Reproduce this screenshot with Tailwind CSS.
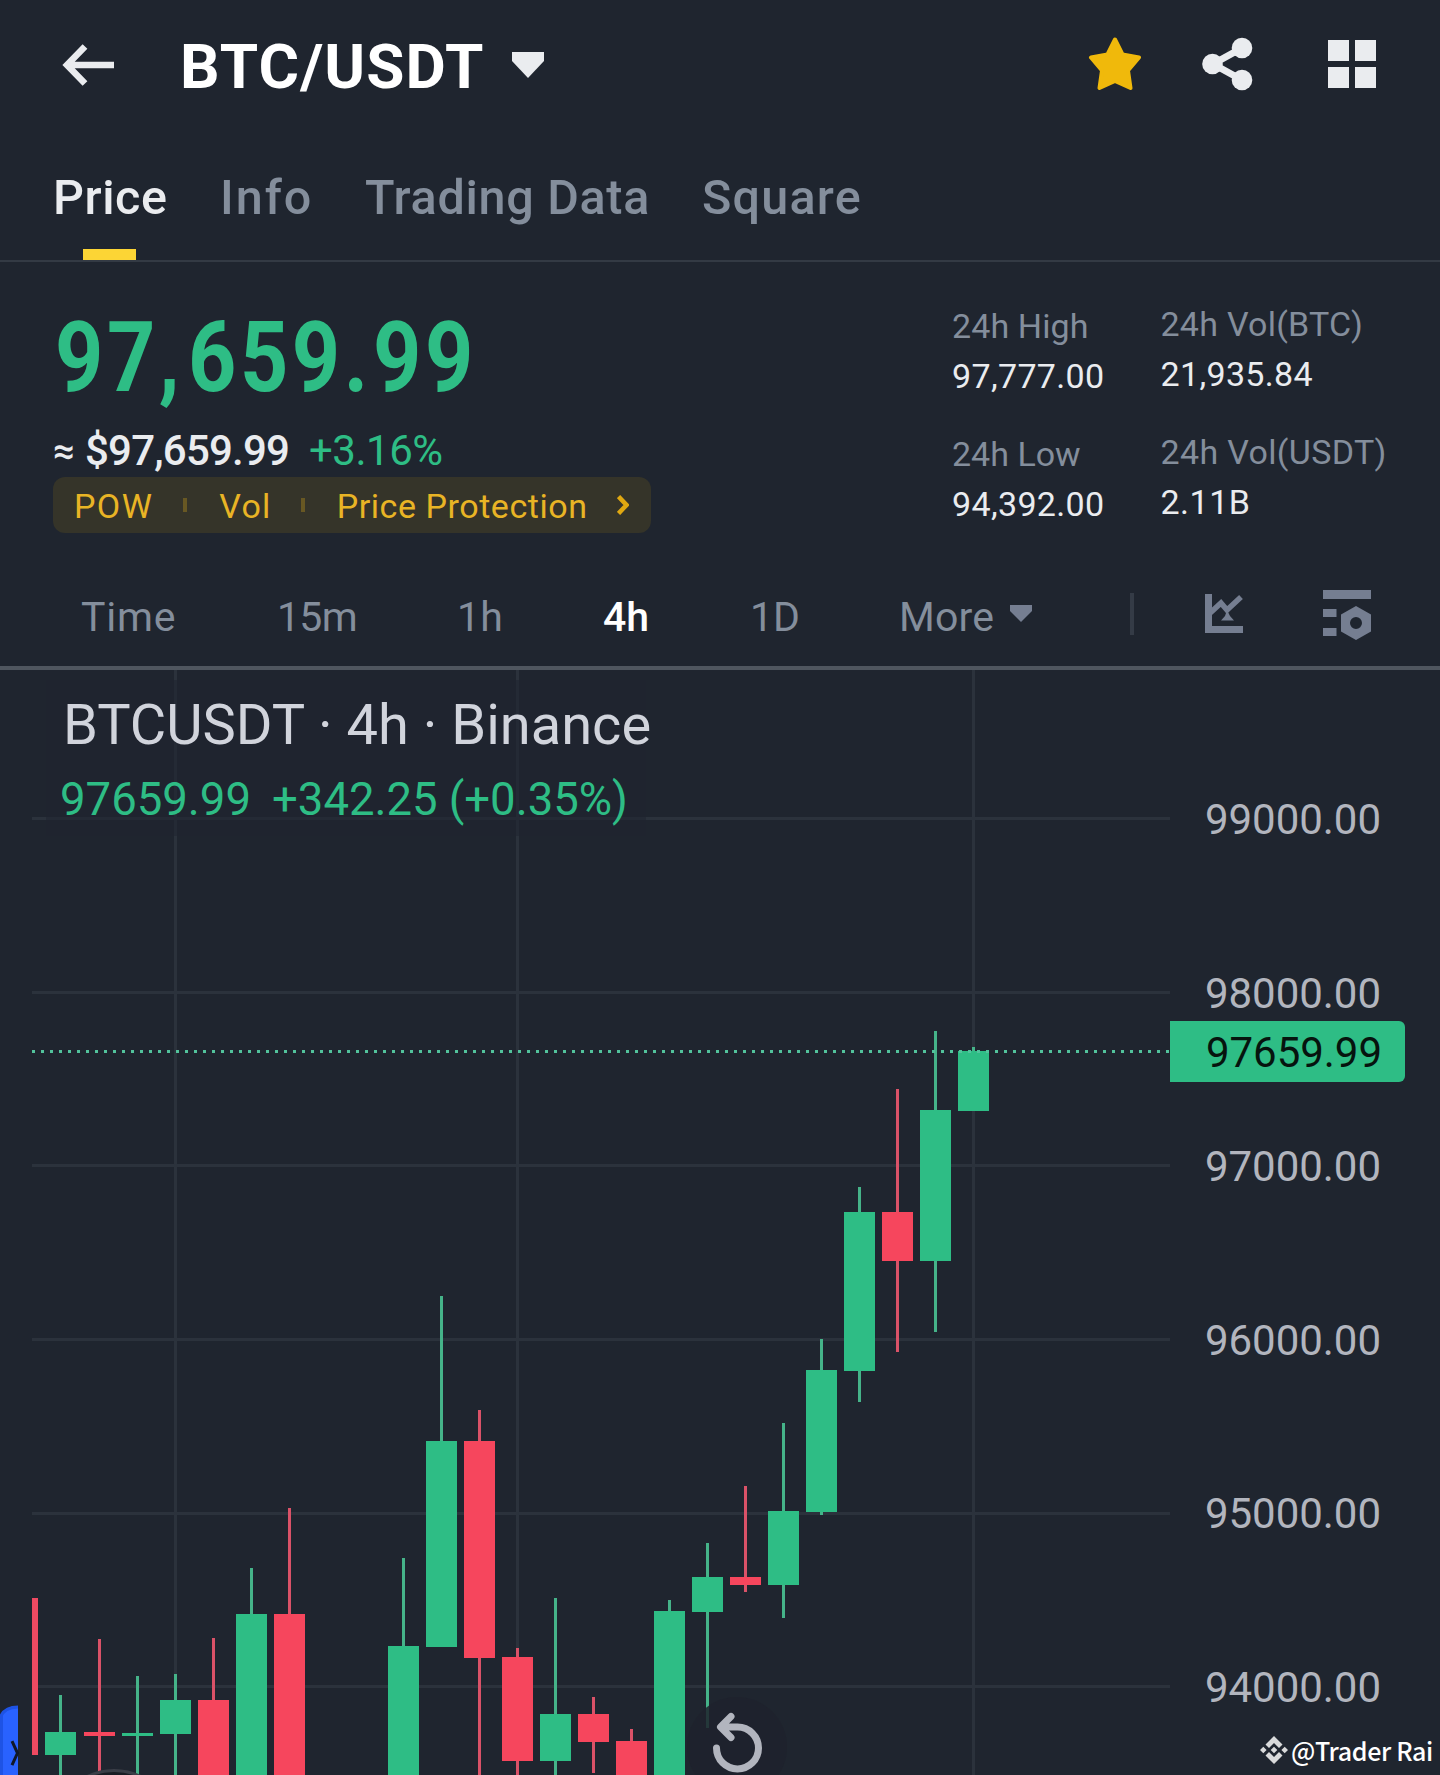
<!DOCTYPE html>
<html lang="en">
<head>
<meta charset="utf-8">
<meta name="viewport" content="width=device-width, initial-scale=1">
<title>BTC/USDT</title>
<script src="https://cdn.jsdelivr.net/npm/@tailwindcss/browser@4"></script>
</head>
<body class="bg-[#1f252f] font-[Roboto,sans-serif] text-[#eaecef]">
<main class="flex h-[1775px] w-[1440px] flex-col overflow-hidden bg-[#1f252f]">

  <header class="flex h-32 items-center pl-[62px] pr-16">
    <svg class="mt-px h-[42px] w-[52px] shrink-0" viewBox="0 0 52 42" fill="none" stroke="#eaecef" stroke-width="6.6"><path d="M52 21H6M23 2.5L5 21L23 39.5"/></svg>
    <h1 class="ml-[66px] pt-1.5 text-[62px] font-bold leading-none tracking-[1.1px] whitespace-nowrap text-white">BTC/USDT</h1>
    <svg class="ml-[28px] mt-0.5 h-[26px] w-8" viewBox="0 0 32 26" fill="#eaecef"><path d="M0 0H32V9L16 26L0 9Z"/></svg>
    <div class="ml-auto flex items-center">
      <svg class="h-[54px] w-[54px]" viewBox="0 0 54 54" fill="#f0b90b" stroke="#f0b90b" stroke-width="4" stroke-linejoin="round"><path d="M27 2.5L34.5 17.5L51 20.5L40 33.5L42.5 51L27 44L11.5 51L14 33.5L3 20.5L19.5 17.5Z"/></svg>
      <svg class="ml-[60px] h-[54px] w-[51px]" viewBox="0 0 51 54" fill="#eaecef"><path d="M11 27L40 11M11 27L40 43" stroke="#eaecef" stroke-width="7"/><circle cx="10.5" cy="27" r="10.3"/><circle cx="40" cy="11" r="10.3"/><circle cx="40" cy="43" r="10.3"/></svg>
      <svg class="ml-[75px] h-12 w-12" viewBox="0 0 48 48" fill="#eaecef"><path d="M0 0H21V21H0ZM27 0H48V21H27ZM0 27H21V48H0ZM27 27H48V48H27Z"/></svg>
    </div>
  </header>

  <nav class="grid h-[134px] shrink-0 grid-cols-[167px_145px_337px_1fr] border-b-2 border-[#333a44] pl-[53px] pt-10 text-[48.5px] font-medium leading-[60px] whitespace-nowrap text-[#848e9c]">
    <div class="relative tracking-[0.55px] text-[#eaecef]">Price<span class="absolute bottom-0 left-[30px] h-[11px] w-[53px] bg-[#fcd535]"></span></div>
    <span class="tracking-[2px]">Info</span>
    <span class="tracking-[0.7px]">Trading Data</span>
    <span class="tracking-[1.2px]">Square</span>
  </nav>

  <section class="flex h-[306px] shrink-0 justify-between pl-[53px]">
    <div class="flex flex-col items-start pt-[46px]">
      <div class="ml-0.5 origin-left scale-x-86 text-[98px] font-bold leading-[100px] tracking-[4.1px] whitespace-nowrap text-[#2ebd85]">97<span class="tracking-[10px]">,</span>659<span class="tracking-[5.7px]">.</span>99</div>
      <div class="mt-[18px] flex h-[50px] items-center text-[42px] leading-[50px] whitespace-nowrap">
        <span class="w-8 text-[38px] font-medium">≈</span>
        <span class="font-medium tracking-[-0.8px]">$97,659.99</span>
        <span class="ml-5 tracking-[-0.5px] text-[#2ebd85]">+3.16%</span>
      </div>
      <div class="mt-px flex h-14 w-[598px] items-center rounded-xl bg-[#353429] pl-[21px] text-[34px] whitespace-nowrap text-[#e9b425]">
        <span class="pt-0.5 tracking-[1.4px]">POW</span><span class="ml-[30px] h-[14px] w-1 bg-[#685823]"></span>
        <span class="ml-8 pt-0.5 tracking-[1.3px]">Vol</span><span class="ml-[29px] h-[14px] w-1 bg-[#685823]"></span>
        <span class="ml-8 pt-0.5 tracking-[0.55px]">Price Protection</span>
        <svg class="ml-[29px] h-5 w-3" viewBox="0 0 12 20" fill="none" stroke="#e0a811" stroke-width="4.5"><path d="M1.5 1.5L9.5 10L1.5 18.5"/></svg>
      </div>
    </div>
    <dl class="grid w-[488px] grid-cols-[208.5px_1fr] pt-[43px] text-[34px] leading-10 tracking-[0.34px] whitespace-nowrap">
      <div class="pt-px"><dt class="tracking-[0.1px] text-[#848e9c]">24h High</dt><dd class="mt-2.5">97,777.00</dd><dt class="mt-[38px] tracking-normal text-[#848e9c]">24h Low</dt><dd class="mt-2.5">94,392.00</dd></div>
      <div class="-mt-px"><dt class="tracking-[0.25px] text-[#848e9c]">24h Vol(BTC)</dt><dd class="mt-2.5">21,935.84</dd><dt class="mt-[38px] text-[#848e9c]">24h Vol(USDT)</dt><dd class="mt-2.5 tracking-[0.5px]">2.11B</dd></div>
    </dl>
  </section>

  <nav class="grid h-[102px] shrink-0 grid-cols-[196px_180px_146px_147px_148px_112px_120px_75px_118px_1fr] items-center border-b-4 border-[#4f565f] pl-[81px] text-[41px] whitespace-nowrap text-[#848e9c]">
    <span class="pt-0.5 tracking-[0.8px]">Time</span><span class="pt-0.5 tracking-[-0.7px]">15m</span><span class="pt-0.5 tracking-[0.2px]">1h</span><span class="pt-0.5 font-medium text-white">4h</span><span class="pt-0.5">1D</span><span class="pt-0.5 pl-px tracking-[0.2px]">More</span>
    <svg class="mb-2 h-[17px] w-[22px]" viewBox="0 0 22 17" fill="#757e91"><path d="M0 0H22V6L11 17L0 6Z"/></svg>
    <i class="mb-1.5 h-[42px] w-1 bg-[#343b46]"></i>
    <svg class="mb-2 h-[39px] w-[39px]" viewBox="0 0 39 39" fill="none" stroke="#757e91" stroke-width="6"><path d="M3.5 0V35.5H38" stroke-width="7"/><path d="M4 20L16 9L22 16L36 3" stroke-width="5.5"/><path d="M22 16L25 22L29 26.5H16L20 22Z" fill="#757e91" stroke="none"/></svg>
    <svg class="mb-1 h-[50px] w-12" viewBox="0 0 48 50" fill="#757e91"><path d="M0 0H48V9H0ZM0 19H13.5V27H0ZM0 38H13.5V46H0Z"/><path fill-rule="evenodd" d="M33 16L48 24.5V41.5L33 50L18 41.5V24.5ZM33 27A6 6 0 1 0 33 39A6 6 0 1 0 33 27Z"/></svg>
  </nav>

  <section class="relative h-[1105px] shrink-0">
    <svg class="block h-[1105px] w-[1440px]" viewBox="0 670 1440 1105">
      <path d="M32 818.5H1170M32 992.5H1170M32 1165.5H1170M32 1339.5H1170M32 1513.5H1170M32 1686.5H1170M175.5 670V1775M517.5 670V1775M973.5 670V1775" stroke="#2b323c" stroke-width="3" fill="none"/>
      <rect x="46" y="680" width="600" height="156" fill="#1f252f" opacity=".55"/>
      <g id="candles"></g>
      <path d="M32 1051.5H1170" stroke="#52c39c" stroke-width="3" stroke-dasharray="3 6"/>
      <path d="M1170 1021H1399a6 6 0 0 1 6 6V1076a6 6 0 0 1-6 6H1170Z" fill="#2ebd85"/>
      <g font-family="Roboto, sans-serif" font-size="42" fill="#b2b5be">
        <text x="1205" y="834" textLength="176">99000.00</text>
        <text x="1205" y="1008" textLength="176">98000.00</text>
        <text x="1206" y="1067" textLength="176" fill="#06140e">97659.99</text>
        <text x="1205" y="1181" textLength="176">97000.00</text>
        <text x="1205" y="1355" textLength="176">96000.00</text>
        <text x="1205" y="1528" textLength="176">95000.00</text>
        <text x="1205" y="1702" textLength="176">94000.00</text>
      </g>
      <!-- reset view button -->
      <circle cx="737" cy="1747" r="50" fill="#1e222d" opacity=".85"/>
      <path d="M716.5 1748A21 21 0 1 0 737.5 1727H722M731 1716.5L720.5 1727L731 1737.5" fill="none" stroke="#b2b5be" stroke-width="7" stroke-linecap="round" stroke-linejoin="round"/>
      <!-- chart badge and side drawer handle, both cut by the viewport -->
      <circle cx="114" cy="1831" r="60.5" fill="#191d24" stroke="#3a3e47" stroke-width="3"/>
      <path d="M0 1775V1718Q4 1706 18 1706V1775Z" fill="#2962ff"/>
      <path d="M0 1718Q4 1707 18 1707" fill="none" stroke="#1e53e5" stroke-width="3"/>
      <path d="M0 1716H3V1775H0Z" fill="#1e53e5"/>
      <path d="M12 1741L17.5 1753L12 1765" fill="none" stroke="#101828" stroke-width="3"/>
    </svg>
    <div class="absolute left-[63px] top-[23px] text-[56px] leading-[64px] whitespace-nowrap text-[#d1d4dc]">BTCUSDT · 4h · Binance</div>
    <div class="absolute left-[60px] top-[102px] flex text-[45.5px] leading-[56px] whitespace-nowrap text-[#2ebd85]"><span>97659.99</span><span class="ml-[21px]">+342.25</span><span class="ml-[11px]">(+0.35%)</span></div>
    <div class="absolute left-[1260px] top-[1062px] flex items-center">
      <svg class="h-7 w-7" viewBox="0 0 28 28" fill="#d9dadb"><path d="M14 0L22.5 8.5L19 12L14 7L9 12L5.5 8.5ZM14 28L22.5 19.5L19 16L14 21L9 16L5.5 19.5ZM14 10.7L17.3 14L14 17.3L10.7 14ZM3.3 10.7L6.6 14L3.3 17.3L0 14ZM24.7 10.7L28 14L24.7 17.3L21.4 14Z"/></svg>
      <span class="ml-[3px] font-['Noto_Sans_CJK_SC',sans-serif] text-[25px] font-medium leading-9 tracking-[-0.35px] whitespace-nowrap text-white">@Trader Rai</span>
    </div>
  </section>
</main>
<script>
  // [body x, body top, body bottom, wick top, wick bottom, rising]
  const candles = [
    [45,1732,1755,1695,1775,1],[84,1732,1736,1639,1775,0],[122,1733,1736,1676,1775,1],[160,1700,1734,1674,1775,1],
    [198,1700,1775,1638,1775,0],[236,1614,1775,1568,1775,1],[274,1614,1775,1508,1775,0],[388,1646,1775,1558,1775,1],
    [426,1441,1647,1296,1647,1],[464,1441,1658,1410,1775,0],[502,1657,1761,1648,1775,0],[540,1714,1761,1598,1775,1],
    [578,1714,1742,1697,1773,0],[616,1741,1775,1729,1775,0],[654,1611,1775,1600,1775,1],[692,1577,1612,1543,1728,1],
    [730,1577,1585,1486,1592,0],[768,1511,1585,1423,1618,1],[806,1370,1512,1339,1515,1],[844,1212,1371,1187,1402,1],
    [882,1212,1261,1089,1352,0],[920,1110,1261,1031,1332,1],[958,1051,1111,1047,1111,1]
  ];
  let out = '<rect x="32" y="1598" width="6" height="157" fill="#ee4a62"/>';
  for (const [x, t, b, wt, wb, up] of candles) {
    out += `<rect x="${x + 14}" y="${wt}" width="3" height="${wb - wt}" fill="${up ? '#45b389' : '#da5268'}"/>`;
    out += `<rect x="${x}" y="${t}" width="31" height="${b - t}" fill="${up ? '#2ebd85' : '#f6465d'}"/>`;
  }
  document.getElementById('candles').innerHTML = out;
</script>
</body>
</html>
